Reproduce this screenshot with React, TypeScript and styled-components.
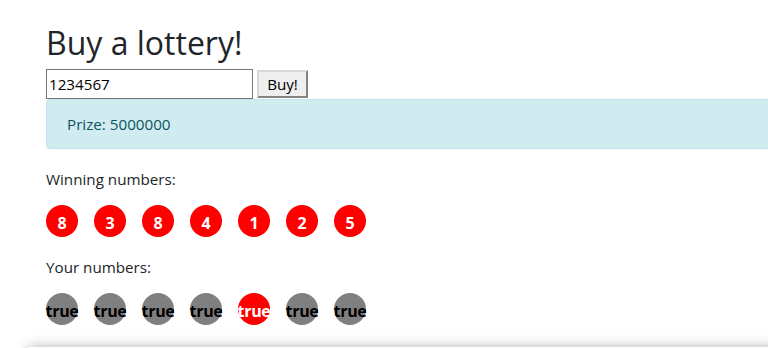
import React from "react";
import styled, { createGlobalStyle } from "styled-components";

const GlobalStyle = createGlobalStyle`
  html, body {
    margin: 0;
    padding: 0;
    background: #ffffff;
    overflow: hidden;
  }
  body {
    font-family: "Open Sans", "Noto Sans", sans-serif;
    font-size: 15.2px;
    line-height: 24px;
    color: #212529;
  }
`;

const Page = styled.div`
  width: 1200px;
  padding: 23px 0 0 46px;
`;

const Title = styled.h1`
  margin: 0 0 6px;
  font-size: 32px;
  font-weight: 400;
  line-height: 40px;
  color: #212529;
`;

const BuyRow = styled.form`
  display: flex;
  align-items: center;
  gap: 4px;
  height: 30px;
`;

const TicketInput = styled.input`
  box-sizing: border-box;
  width: 207px;
  height: 30px;
  padding: 0 2px;
  font-family: inherit;
  font-size: 15.2px;
  color: #000000;
  border: 1px solid #767676;
  outline: none;
`;

const BuyButton = styled.button`
  box-sizing: border-box;
  width: 51px;
  height: 28px;
  padding: 0;
  font-family: inherit;
  font-size: 15.2px;
  color: #000000;
  background-color: #efefef;
  border: 2px outset #d8d8d8;
`;

const PrizeAlert = styled.div`
  margin-bottom: 16px;
  padding: 12px 20px;
  color: #0c5460;
  background-color: #d1ecf1;
  border: 1px solid #bee5eb;
  border-radius: 4px;
`;

const SectionLabel = styled.p`
  margin: 0 0 16px;
  padding-top: 2px;
  height: 22px;
`;

const BallRow = styled.div`
  display: flex;
  gap: 16px;
  margin-bottom: 16px;
`;

const Ball = styled.span<{ $hit: boolean; $light: boolean }>`
  display: flex;
  align-items: center;
  justify-content: center;
  width: 32px;
  height: 32px;
  padding-top: 3px;
  box-sizing: border-box;
  border-radius: 50%;
  font-weight: 700;
  font-size: 16px;
  letter-spacing: -0.3px;
  white-space: nowrap;
  background-color: ${(p) => (p.$hit ? "#ff0000" : "#808080")};
  color: ${(p) => (p.$light ? "#ffffff" : "#000000")};
`;

const Footer = styled.div`
  margin: 22px 0 0 -18px;
  height: 40px;
  background: #ffffff;
  box-shadow: 0 0 12px rgba(0, 0, 0, 0.3);
`;

const winning = [8, 3, 8, 4, 1, 2, 5];
const yours = [false, false, false, false, true, false, false];

function App() {
  return (
    <>
      <GlobalStyle />
      <Page>
        <Title>Buy a lottery!</Title>
        <BuyRow onSubmit={(e) => e.preventDefault()}>
          <TicketInput type="text" defaultValue="1234567" />
          <BuyButton type="submit">Buy!</BuyButton>
        </BuyRow>
        <PrizeAlert>Prize: 5000000</PrizeAlert>

        <SectionLabel>Winning numbers:</SectionLabel>
        <BallRow>
          {winning.map((n, i) => (
            <Ball key={i} $hit={true} $light={true}>
              {n}
            </Ball>
          ))}
        </BallRow>

        <SectionLabel>Your numbers:</SectionLabel>
        <BallRow>
          {yours.map((hit, i) => (
            <Ball key={i} $hit={hit} $light={hit}>
              true
            </Ball>
          ))}
        </BallRow>
        <Footer />
      </Page>
    </>
  );
}

export default App;
